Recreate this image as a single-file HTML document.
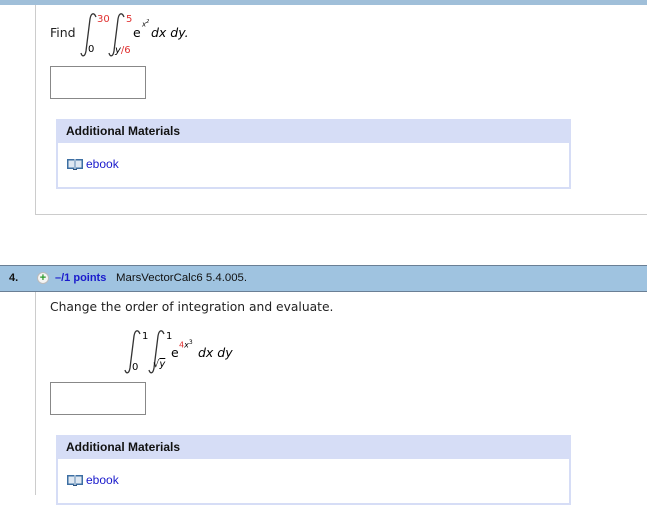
<!DOCTYPE html>
<html><head><style>
body{margin:0;width:647px;height:495px;position:relative;overflow:hidden;background:#fff;font-family:"Liberation Sans",sans-serif;}
.a{position:absolute}
.dv{font-family:"DejaVu Sans",sans-serif;}
.inp{position:absolute;left:50px;width:94px;height:31px;border:1px solid #888;background:#fff}
.mat{position:absolute;left:56px;width:515px;border:2px solid #d6ddf6;border-top:none;background:#fff;box-sizing:border-box}
.mh{height:24px;background:#d6ddf6;font-weight:bold;font-size:12px;line-height:24px;padding-left:10px;color:#111;margin:0 -2px}
.eb{font-size:12px;color:#1a1acc;padding:14px 0 0 9px;line-height:14px}
.eb svg{vertical-align:-2px;margin-right:3px}
.red{color:#e03030}
svg.i{position:absolute;left:0;top:0}
</style></head><body>
<div class="a" style="left:0;top:0;width:647px;height:5px;background:#a0bfd9"></div>
<div class="a" style="left:35px;top:5px;width:1px;height:210px;background:#ccc"></div>
<div class="a" style="left:35px;top:214px;width:612px;height:1px;background:#ccc"></div>

<svg class="i" width="647" height="495" fill="none" stroke="#333" stroke-width="1.3">
<path d="M96 17 C94 12,91 13,90 19 L86 51 C85 57,82 57,81 53"/>
<path d="M124 17 C122 12,119 13,118 19 L114 51 C113 57,110 57,109 53"/>
<path d="M140 334 C138 329,135 330,134 336 L130 368 C129 374,126 374,125 370"/>
<path d="M164 334 C162 329,159 330,158 336 L154 368 C153 374,150 374,149 370"/>
</svg>

<div class="a dv" style="left:50px;top:25px;font-size:12.5px;color:#222">Find</div>
<div class="a dv red" style="left:97px;top:14px;font-size:10px">30</div>
<div class="a dv" style="left:88px;top:44px;font-size:10px">0</div>
<div class="a dv red" style="left:126px;top:14px;font-size:10px">5</div>
<div class="a dv" style="left:115px;top:45px;font-size:10px;font-style:italic">y<span class="red" style="font-style:normal">/6</span></div>
<div class="a dv" style="left:133px;top:25px;font-size:12.5px">e</div>
<div class="a dv" style="left:142px;top:19px;font-size:7px;font-style:italic">x<sup style="font-size:5px">2</sup></div>
<div class="a dv" style="left:151px;top:25px;font-size:12.5px;font-style:italic">dx dy.</div>
<div class="inp" style="top:66px"></div>
<div class="mat" style="top:119px;height:70px"><div class="mh">Additional Materials</div><div class="eb"><svg width="16" height="12" viewBox="0 0 16 12"><path d="M0 1h7.5v10H0z M8.5 1H16v10H8.5z" fill="#3d6fa3"/><path d="M1.5 2.5h5.5v7H1.5z M9 2.5h5.5v7H9z" fill="#dfe8f2"/><path d="M6 11h4v1H6z" fill="#2c4f78"/></svg>ebook</div></div>

<div class="a" style="left:0;top:265px;width:647px;height:27px;background:#9fc3e0;border-top:1px solid #6a7f95;border-bottom:1px solid #6a7f95;box-sizing:border-box"></div>
<div class="a" style="left:9px;top:272px;font-size:11px;font-weight:bold;color:#111">4.</div>
<div class="a" style="left:37px;top:272px;width:12px;height:12px;border-radius:50%;background:#f4f4f4;border:1px solid #bbb;box-sizing:border-box;color:#2a9a2a;font-size:11px;line-height:10px;text-align:center;font-weight:bold">+</div>
<div class="a" style="left:55px;top:272px;font-size:11px;font-weight:bold;color:#1a1acc">–/1 points</div>
<div class="a" style="left:116px;top:272px;font-size:11.4px;color:#111">MarsVectorCalc6 5.4.005.</div>
<div class="a" style="left:35px;top:292px;width:1px;height:203px;background:#ccc"></div>
<div class="a dv" style="left:50px;top:300px;font-size:12.3px;color:#222">Change the order of integration and evaluate.</div>
<div class="a dv" style="left:142px;top:331px;font-size:10px">1</div>
<div class="a dv" style="left:132px;top:362px;font-size:10px">0</div>
<div class="a dv" style="left:166px;top:331px;font-size:10px">1</div>
<div class="a dv" style="left:153px;top:359px;font-size:10px;font-style:italic"><span style="font-style:normal">√</span><span style="text-decoration:overline">y</span></div>
<div class="a dv" style="left:171px;top:345px;font-size:12.5px">e</div>
<div class="a dv" style="left:179px;top:339px;font-size:8px"><span class="red">4</span><i>x</i><sup style="font-size:6px">3</sup></div>
<div class="a dv" style="left:198px;top:345px;font-size:12.5px;font-style:italic">dx dy</div>
<div class="inp" style="top:382px"></div>
<div class="mat" style="top:435px;height:70px"><div class="mh">Additional Materials</div><div class="eb"><svg width="16" height="12" viewBox="0 0 16 12"><path d="M0 1h7.5v10H0z M8.5 1H16v10H8.5z" fill="#3d6fa3"/><path d="M1.5 2.5h5.5v7H1.5z M9 2.5h5.5v7H9z" fill="#dfe8f2"/><path d="M6 11h4v1H6z" fill="#2c4f78"/></svg>ebook</div></div>
</body></html>
